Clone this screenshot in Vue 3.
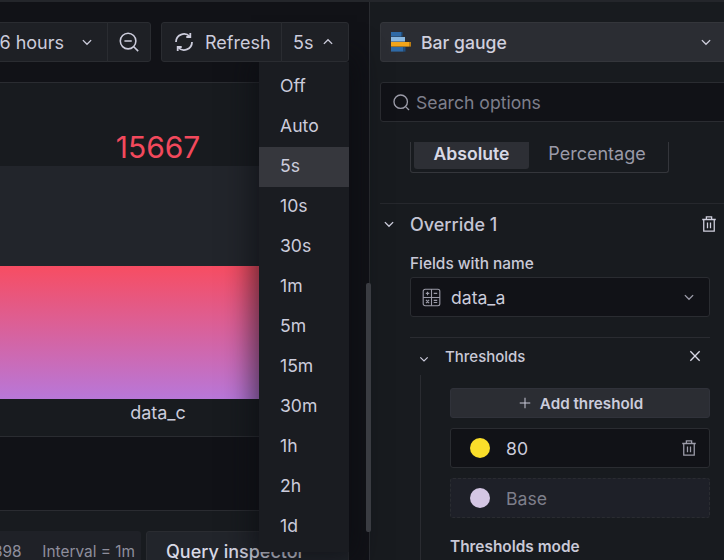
<script setup>
const items = ['Off', 'Auto', '5s', '10s', '30s', '1m', '5m', '15m', '30m', '1h', '2h', '1d']
</script>

<template>
  <div class="app">
    <section class="main">
      <header class="toolbar">
        <div class="group">
          <button class="btn time">6 hours
            <svg class="chev" viewBox="0 0 24 24"><path d="M6.5 9.5 12 15l5.5-5.5" /></svg>
          </button>
          <button class="btn zoom">
            <svg class="ic" viewBox="0 0 24 24"><circle cx="11" cy="11" r="8.5" /><path d="M7 11h8M17.2 17.2l4.8 4.8" /></svg>
          </button>
        </div>
        <div class="group">
          <button class="btn refresh">
            <svg class="ic ic-r" viewBox="0 0 24 24"><path d="M20 12a8 8 0 0 1-13.8 5.5M4 12A8 8 0 0 1 17.8 6.5" /><path d="M18.3 3v4h-4M5.7 21v-4h4" /></svg>
            <span>Refresh</span>
          </button>
          <button class="btn interval">5s
            <svg class="chev" viewBox="0 0 24 24"><path d="M6.5 14.5 12 9l5.5 5.5" /></svg>
          </button>
        </div>
      </header>

      <div class="panel">
        <div class="value">15667</div>
        <div class="track"><div class="bar"></div></div>
        <div class="label">data_c</div>
      </div>
      <div class="empty"></div>
      <div class="querybar">
        <div class="stats"><span class="count">398</span><span class="interval-text">Interval = 1m</span></div>
        <button class="qi">Query inspector</button>
      </div>

      <ul class="menu">
        <li v-for="item in items" :key="item" :class="{ active: item === '5s' }">{{ item }}</li>
      </ul>
      <div class="scroll"></div>
    </section>

    <aside class="side">
      <div class="viz">
        <svg class="viz-ic" viewBox="0 0 20 20">
          <rect x="0" y="0" width="10" height="4.6" fill="#2f6aa6" />
          <rect x="10" y="0" width="1.5" height="4.6" fill="#1f4f80" />
          <rect x="0" y="5" width="14" height="4.6" fill="#8ab8e0" />
          <rect x="0" y="10" width="18" height="4.6" fill="#f2a51a" />
          <rect x="18" y="10" width="2" height="4.6" fill="#b97c14" />
          <rect x="0" y="15" width="12.5" height="4.6" fill="#2f6aa6" />
          <rect x="12.5" y="15" width="2" height="4.6" fill="#1f4f80" />
        </svg>
        <span>Bar gauge</span>
        <svg class="chev end" viewBox="0 0 24 24"><path d="M6.5 9.5 12 15l5.5-5.5" /></svg>
      </div>
      <div class="search">
        <svg class="ic" viewBox="0 0 24 24"><circle cx="11" cy="11" r="8.5" /><path d="m17.5 17.5 4 4" /></svg>
        <span>Search options</span>
      </div>
      <div class="scrollarea">
        <div class="radio">
          <span class="opt on">Absolute</span>
          <span class="opt">Percentage</span>
        </div>
        <div class="override">
          <div class="ov-head">
            <svg class="chev small" viewBox="0 0 24 24"><path d="M6.5 9.5 12 15l5.5-5.5" /></svg>
            <span class="ov-title">Override 1</span>
            <svg class="ic trash" viewBox="0 0 24 24"><path d="M3 6h18M8.5 6V2.5h7V6M5 6v15.5h14V6M10 10v7.5M14 10v7.5" /></svg>
          </div>
          <div class="field-label">Fields with name</div>
          <div class="select">
            <svg class="calc" viewBox="0 0 24 24"><rect x="1.5" y="1.5" width="21" height="21" rx="2.5" /><path d="M1.5 12h21M12 1.5v21M4.8 6.8h4.4M7 4.6v4.4M14.8 6.8h4.4M5 15l4 4M9 15l-4 4M14.8 15.6h4.4M14.8 18.4h4.4" /></svg>
            <span>data_a</span>
            <svg class="chev end" viewBox="0 0 24 24"><path d="M6.5 9.5 12 15l5.5-5.5" /></svg>
          </div>
          <div class="prop">
            <div class="prop-head">
              <svg class="chev small" viewBox="0 0 24 24"><path d="M6.5 9.5 12 15l5.5-5.5" /></svg>
              <span class="prop-title">Thresholds</span>
              <svg class="close" viewBox="0 0 24 24"><path d="M5 5l14 14M19 5 5 19" /></svg>
            </div>
            <div class="prop-body">
              <button class="add">
                <svg class="plus" viewBox="0 0 24 24"><path d="M12 3v18M3 12h18" /></svg>
                Add threshold
              </button>
              <div class="thr">
                <i class="dot yellow"></i>
                <span>80</span>
                <svg class="ic trash2" viewBox="0 0 24 24"><path d="M3 6h18M8.5 6V2.5h7V6M5 6v15.5h14V6M10 10v7.5M14 10v7.5" /></svg>
              </div>
              <div class="thr base">
                <i class="dot lilac"></i>
                <span>Base</span>
              </div>
              <div class="field-label mode">Thresholds mode</div>
            </div>
          </div>
        </div>
      </div>
    </aside>
  </div>
</template>

<style>
html, body { margin: 0; background: #111217; }
</style>

<style scoped>
.app {
  width: 724px; height: 560px; overflow: hidden; display: flex; position: relative;
  background: #111217; color: #ccccdc; box-sizing: border-box;
  font-family: Inter, "Liberation Sans", sans-serif; font-size: 17.6px;
  border-top: 2px solid #24262b;
}
svg { fill: none; stroke: currentColor; stroke-width: 1.7; flex: none; }
button { font: inherit; color: inherit; }

.main { width: 369px; flex: none; display: flex; flex-direction: column; position: relative; }
.main > * { flex: none; }
.toolbar { display: flex; justify-content: flex-end; gap: 10px; padding: 20px 20px 20px 0; height: 40px; position: relative; z-index: 3; }
.group { display: flex; }
.btn {
  height: 40px; display: flex; align-items: center; box-sizing: border-box;
  background: #1e2025; border: 1px solid #2a2c31; padding: 0; white-space: nowrap; font-size: 18px;
}
.time { width: 110px; border-left: 0; justify-content: flex-end; padding-right: 11px; gap: 14px; }
.zoom { width: 44px; justify-content: center; border-radius: 0 3px 3px 0; margin-left: -1px; }
.refresh { width: 121px; padding-left: 10px; gap: 9px; border-radius: 3px 0 0 3px; }
.interval { width: 68px; padding-left: 11px; gap: 6px; border-radius: 0 3px 3px 0; margin-left: -1px; }
.chev { width: 18px; height: 18px; stroke-width: 1.8; }
.ic { width: 20px; height: 20px; }
.ic-r { width: 24px; height: 24px; stroke-width: 1.8; }
.zoom .ic { width: 22px; height: 22px; stroke-width: 1.7; }

.panel {
  width: 349px; height: 355px; box-sizing: border-box; background: #181b1f;
  border-top: 1px solid #2a2c31; border-bottom: 1px solid #2a2c31;
  display: flex; flex-direction: column; align-items: flex-start;
}
.panel > * { flex: none; }
.value { width: 316px; height: 83px; box-sizing: border-box; padding-top: 46px; text-align: center; color: #f2495c; font-size: 30px; line-height: 36px; }
.track { width: 349px; height: 233px; background: #22252b; display: flex; align-items: flex-end; }
.bar { width: 316px; height: 133px; background: linear-gradient(#f74d62, #b877d9); }
.label { width: 316px; text-align: center; margin-top: 3px; line-height: 22px; font-size: 18px; }
.empty { width: 349px; height: 73px; border-bottom: 1px solid #2a2c31; }
.querybar { display: flex; gap: 5px; padding-top: 20px; width: 349px; height: 49px; background: #181b1f; font-size: 15.4px; }
.stats { width: 141px; height: 40px; box-sizing: border-box; background: #1f2127; color: #8e8e9c; padding: 11px 6px 0 0; display: flex; justify-content: space-between; border-radius: 0 3px 0 0; }
.count { margin-left: -7px; }
.interval-text { margin-left: auto; }
.qi { width: 203px; height: 40px; box-sizing: border-box; background: #22252b; border: 1px solid #2a2c31; border-radius: 3px 3px 0 0; font-size: 18px; font-weight: 500; text-align: left; padding: 0 0 0 19px; color: #d8d9e6; white-space: nowrap; }

.menu {
  position: absolute; left: 259px; top: 60px; width: 90px; height: 490px; margin: 0; padding: 5px 0 0; list-style: none; box-sizing: border-box;
  background: #1a1c21; box-shadow: 0 0 26px 8px rgba(10, 12, 16, .6);
}
.menu li { height: 40px; line-height: 38px; padding-left: 21px; }
.menu li.active { background: #36373d; }
.scroll { position: absolute; left: 366px; top: 281px; width: 5px; height: 249px; background: #3a3c42; border-radius: 2px; z-index: 2; }

.side { flex: 1; min-width: 0; background: #181b1f; border-left: 1px solid #2a2c31; padding: 20px 0 0 10px; display: flex; flex-direction: column; }
.side > * { flex: none; }
.viz {
  width: 360px; height: 40px; box-sizing: border-box; display: flex; align-items: center; gap: 10px;
  background: #2b2d33; border: 1px solid #34363b; border-radius: 3px; padding-left: 10px; font-weight: 500; color: #d0d0de;
}
.viz-ic { width: 20px; height: 20px; stroke: none; }
.end { margin-left: auto; }
.viz .end { margin-right: 24px; }
.search {
  width: 360px; height: 40px; margin-top: 20px; box-sizing: border-box; display: flex; align-items: center; gap: 5px;
  background: #111217; border: 1px solid #2a2c31; border-radius: 3px; padding-left: 11px; color: #7e7f8b;
}
.search .ic { color: #9c9ca9; width: 19px; height: 19px; }
.scrollarea { padding-top: 20px; }
.radio {
  margin-left: 30px; width: 259px; height: 31px; box-sizing: border-box; display: flex; border: 1px solid #34363b; border-top: 0; border-radius: 0 0 3px 3px; padding: 0 3px 3px; align-items: stretch;
}
.opt { width: 136px; text-align: center; line-height: 24px; color: #9a9aa8; font-size: 18px; }
.opt.on { width: 115px; background: #2d2f35; color: #d8d9e6; font-weight: 600; border-radius: 0 0 3px 3px; font-size: 17.6px; }

.override { margin-top: 30px; border-top: 1px solid #26282d; padding-left: 30px; }
.ov-head { position: relative; height: 40px; display: flex; align-items: center; }
.ov-head .small { position: absolute; left: -30px; top: 11px; width: 18px; height: 18px; }
.ov-title { font-weight: 500; color: #c5c5d4; font-size: 18px; }
.trash { margin-left: auto; margin-right: 6px; width: 18px; height: 18px; color: #d0d0de; }
.field-label { font-size: 15.4px; font-weight: 500; color: #c9c9d7; margin-top: 10px; line-height: 20px; }
.select {
  width: 300px; height: 40px; margin-top: 3px; box-sizing: border-box; display: flex; align-items: center; gap: 10px;
  background: #111217; border: 1px solid #2a2c31; border-radius: 3px; padding-left: 11px;
}
.calc { width: 19px; height: 19px; color: #9c9ca9; stroke-width: 1.4; }
.select .end { margin-right: 11px; color: #9c9ca9; }
.small { width: 16px; height: 16px; }
.prop { width: 300px; margin-top: 20px; border-top: 1px solid #2a2c31; }
.prop-head { height: 36px; padding-bottom: 1px; display: flex; align-items: center; padding-left: 6px; position: relative; }
.prop-head .small { margin-top: 5px; }
.prop-title { font-size: 15px; font-weight: 500; margin-left: 13px; color: #c9c9d7; }
.close { margin-left: auto; margin-right: 7px; width: 16px; height: 16px; stroke-width: 2; color: #d8d9e6; }
.prop-body { margin-left: 10px; padding-left: 29px; border-left: 1px solid #2a2c31; padding-top: 13px; height: 200px; }
.add {
  width: 260px; height: 30px; box-sizing: border-box; display: flex; align-items: center; justify-content: center; gap: 8px;
  background: #2b2d33; border: 1px solid #30323a; border-radius: 3px; font-size: 15.2px; font-weight: 600; padding: 0 0 0 1px;
}
.plus { width: 14px; height: 14px; }
.thr {
  width: 260px; height: 40px; box-sizing: border-box; margin-top: 10px; display: flex; align-items: center; gap: 16px;
  background: #111217; border: 1px solid #2a2c31; border-radius: 3px; padding-left: 19px;
}
.thr.base { background: #1e2028; border-style: dashed; color: #7e7f8b; }
.dot { width: 20px; height: 20px; border-radius: 50%; }
.yellow { background: #fade2a; }
.lilac { background: #d4c6e3; }
.trash2 { margin-left: auto; margin-right: 11px; width: 18px; height: 18px; color: #9c9ca9; }
.mode { margin-top: 19px; font-weight: 600; }
</style>
